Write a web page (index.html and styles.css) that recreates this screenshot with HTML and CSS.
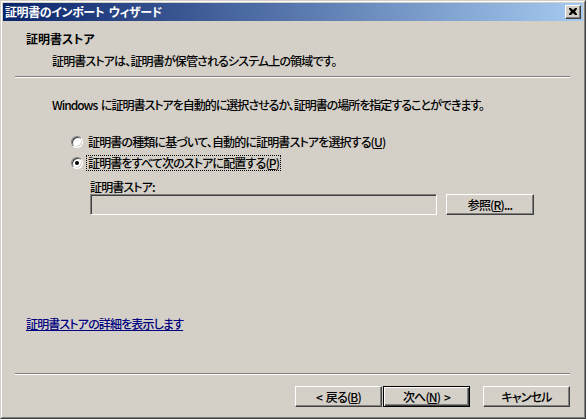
FILE: index.html
```html
<!DOCTYPE html>
<html lang="ja">
<head>
<meta charset="utf-8">
<link rel="stylesheet" href="styles.css">
</head>
<body>
<div class="window">
  <div class="frame">
    <div class="titlebar">
      <span class="title">証明書のインポート ウィザード</span>
      <span class="close">
        <svg width="8" height="7" viewBox="0 0 8 7"><path d="M0 0h2l2 2 2-2h2v1l-2 2.5 2 2.5v1h-2l-2-2-2 2h-2v-1l2-2.5-2-2.5z" fill="#000"/></svg>
      </span>
    </div>
    <div class="client">
      <div class="header">
        <div class="h-title">証明書ストア</div>
        <div class="h-sub">証明書ストアは、証明書が保管されるシステム上の領域です。</div>
      </div>
      <div class="sep top"></div>
      <div class="body">
        <p class="intro">Windows に証明書ストアを自動的に選択させるか、証明書の場所を指定することができます。</p>
        <div class="options">
          <div class="radio"><span class="rb"></span><span class="rtext">証明書の種類に基づいて、自動的に証明書ストアを選択する(<u>U</u>)</span></div>
          <div class="radio second"><span class="rb checked"></span><span class="rtext focus">証明書をすべて次のストアに配置する(<u>P</u>)</span></div>
          <div class="store">
            <div class="store-label">証明書ストア:</div>
            <div class="store-row">
              <div class="field"></div>
              <div class="btn browse">参照(<u>R</u>)...</div>
            </div>
          </div>
        </div>
        <a class="link">証明書ストアの詳細を表示します</a>
      </div>
      <div class="sep bottom"></div>
      <div class="footer">
        <div class="btn back">&lt;&nbsp;戻る(<u>B</u>)</div>
        <div class="btn next default">次へ(<u>N</u>)&nbsp;&gt;</div>
        <div class="btn cancel">キャンセル</div>
      </div>
    </div>
  </div>
</div>
</body>
</html>
```

FILE: styles.css
```css
* { box-sizing: border-box; }
html, body { margin: 0; padding: 0; background: #D4D0C8; }
body {
  font-family: "Noto Sans CJK JP", "Liberation Sans", sans-serif;
  font-size: 12px;
  font-weight: 500;
  color: #000;
  font-feature-settings: "palt" 1;
  letter-spacing: -0.85px;
  word-spacing: 2px;
}
.window {
  width: 586px;
  height: 419px;
  border: 1px solid;
  border-color: #D4D0C8 #404040 #404040 #D4D0C8;
}
.frame {
  height: 100%;
  border: 1px solid;
  border-color: #FFFFFF #808080 #808080 #FFFFFF;
  padding: 1px;
  display: flex;
  flex-direction: column;
}
.titlebar {
  height: 18px;
  background: linear-gradient(to right, #0A246A, #A6CAF0);
  display: flex;
  align-items: center;
  justify-content: space-between;
  padding: 0 2px 0 2px;
}
.title {
  color: #fff;
  font-weight: bold;
  line-height: 16px;
  letter-spacing: -0.4px;
}
.close {
  width: 16px;
  height: 14px;
  background: #D4D0C8;
  border: 1px solid;
  border-color: #FFFFFF #404040 #404040 #FFFFFF;
  box-shadow: inset -1px -1px 0 #808080;
  display: flex;
  align-items: center;
  justify-content: center;
  padding: 0 1px 1px 0;
}
.close svg { display: block; }
.client {
  flex: 1;
  display: flex;
  flex-direction: column;
}
.header {
  padding: 10px 0 0 23px;
}
.h-title {
  font-weight: bold;
  line-height: 16px;
  letter-spacing: 0;
}
.h-sub {
  line-height: 16px;
  margin: 6px 0 0 26px;
}
.sep {
  height: 2px;
  border-top: 1px solid #808080;
  border-bottom: 1px solid #FFFFFF;
  margin: 0 13px 0 12px;
}
.sep.top { margin-top: 7px; }
.body {
  flex: 1;
  padding-left: 49px;
  display: flex;
  flex-direction: column;
  align-items: flex-start;
}
.intro {
  margin: 19px 0 0 0;
  line-height: 16px;
  letter-spacing: -1px;
}
.options {
  margin-top: 21px;
  padding-left: 19px;
}
.radio {
  display: flex;
  align-items: center;
  height: 16px;
}
.radio.second { margin-top: 5px; }
.rb {
  width: 12px;
  height: 12px;
  border-radius: 50%;
  background: #fff;
  border: 1px solid;
  border-color: #808080 #fff #fff #808080;
  box-shadow: inset 1px 1px 0 #404040, inset -1px -1px 0 #D4D0C8;
  margin-right: 4px;
  position: relative;
}
.rb.checked::after {
  content: "";
  position: absolute;
  left: 3px;
  top: 3px;
  width: 4px;
  height: 4px;
  border-radius: 50%;
  background: #000;
}
.rtext {
  line-height: 14px;
  padding: 0 1px;
}
.focus { outline: 1px dotted #000; }
.store { padding-left: 19px; }
.store-label {
  margin-top: 9px;
  line-height: 14px;
}
.store-row {
  display: flex;
  align-items: flex-start;
}
.field {
  width: 347px;
  height: 21px;
  border: 1px solid;
  border-color: #808080 #FFFFFF #FFFFFF #808080;
  box-shadow: inset 1px 1px 0 #404040, inset -1px -1px 0 #D4D0C8;
  background: #D4D0C8;
}
.btn {
  height: 21px;
  width: 88px;
  border: 1px solid;
  border-color: #FFFFFF #404040 #404040 #FFFFFF;
  box-shadow: inset -1px -1px 0 #808080;
  background: #D4D0C8;
  display: flex;
  align-items: center;
  justify-content: center;
  line-height: 14px;
}
.browse { margin-left: 9px; }
.link {
  margin-top: 101px;
  margin-left: -26px;
  line-height: 16px;
  color: #000080;
  text-decoration: underline;
}
.sep.bottom { margin-top: 41px; }
.footer {
  display: flex;
  padding: 11px 0 9px 292px;
}
.footer .btn { width: 87px; }
.next { margin-left: 1px; }
.default {
  border: 1px solid #000;
  box-shadow: inset 1px 1px 0 #fff, inset -1px -1px 0 #404040, inset -2px -2px 0 #808080;
}
.cancel { margin-left: 13px; }
```
